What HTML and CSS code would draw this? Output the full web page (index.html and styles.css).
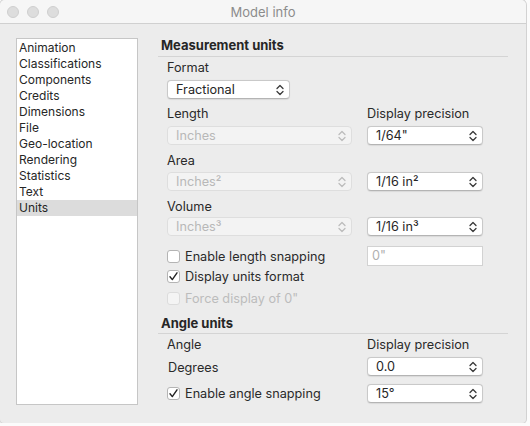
FILE: index.html
```html
<!DOCTYPE html>
<html>
<head>
<meta charset="utf-8">
<link rel="stylesheet" href="styles.css">
</head>
<body>
<div class="window">
  <div class="titlebar">
    <div class="lights"><span></span><span></span><span></span></div>
    <div class="title">Model info</div>
  </div>
  <div class="content">
    <ul class="list">
      <li>Animation</li>
      <li>Classifications</li>
      <li>Components</li>
      <li>Credits</li>
      <li>Dimensions</li>
      <li>File</li>
      <li>Geo-location</li>
      <li>Rendering</li>
      <li>Statistics</li>
      <li>Text</li>
      <li class="sel">Units</li>
    </ul>
    <div class="panel">
      <div class="heading">Measurement units</div>
      <div class="sep"></div>
      <div class="label m3">Format</div>
      <div class="popup w-fmt m4"><span>Fractional</span><svg class="chev" width="8" height="12" viewBox="0 0 8 12"><path d="M1 4.5L4 1.5L7 4.5M1 7.5L4 10.5L7 7.5"/></svg></div>

      <div class="grid m7">
        <div class="label">Length</div>
        <div class="label">Display precision</div>
      </div>
      <div class="grid m4">
        <div class="popup disabled"><span>Inches</span><svg class="chev" width="8" height="12" viewBox="0 0 8 12"><path d="M1 4.5L4 1.5L7 4.5M1 7.5L4 10.5L7 7.5"/></svg></div>
        <div class="popup"><span>1/64"</span><svg class="chev" width="8" height="12" viewBox="0 0 8 12"><path d="M1 4.5L4 1.5L7 4.5M1 7.5L4 10.5L7 7.5"/></svg></div>
      </div>

      <div class="label m8">Area</div>
      <div class="grid m3">
        <div class="popup disabled"><span>Inches²</span><svg class="chev" width="8" height="12" viewBox="0 0 8 12"><path d="M1 4.5L4 1.5L7 4.5M1 7.5L4 10.5L7 7.5"/></svg></div>
        <div class="popup"><span>1/16 in²</span><svg class="chev" width="8" height="12" viewBox="0 0 8 12"><path d="M1 4.5L4 1.5L7 4.5M1 7.5L4 10.5L7 7.5"/></svg></div>
      </div>

      <div class="label m8">Volume</div>
      <div class="grid m2">
        <div class="popup disabled"><span>Inches³</span><svg class="chev" width="8" height="12" viewBox="0 0 8 12"><path d="M1 4.5L4 1.5L7 4.5M1 7.5L4 10.5L7 7.5"/></svg></div>
        <div class="popup"><span>1/16 in³</span><svg class="chev" width="8" height="12" viewBox="0 0 8 12"><path d="M1 4.5L4 1.5L7 4.5M1 7.5L4 10.5L7 7.5"/></svg></div>
      </div>

      <div class="grid row20 m10">
        <label class="check"><span class="box"></span>Enable length snapping</label>
        <div class="field">0"</div>
      </div>
      <div class="grid row20">
        <label class="check"><span class="box on"><svg width="13" height="13" viewBox="0 0 13 13"><path d="M3 6.8L5.3 9.6L10 2.8"/></svg></span>Display units format</label>
      </div>
      <div class="grid row20 m2">
        <label class="check off"><span class="box"></span>Force display of 0"</label>
      </div>

      <div class="heading m7">Angle units</div>
      <div class="sep m2"></div>
      <div class="grid m3">
        <div class="label">Angle</div>
        <div class="label">Display precision</div>
      </div>
      <div class="grid m4">
        <div class="label plain">Degrees</div>
        <div class="popup"><span>0.0</span><svg class="chev" width="8" height="12" viewBox="0 0 8 12"><path d="M1 4.5L4 1.5L7 4.5M1 7.5L4 10.5L7 7.5"/></svg></div>
      </div>
      <div class="grid m8">
        <label class="check"><span class="box on"><svg width="13" height="13" viewBox="0 0 13 13"><path d="M3 6.8L5.3 9.6L10 2.8"/></svg></span>Enable angle snapping</label>
        <div class="popup"><span>15°</span><svg class="chev" width="8" height="12" viewBox="0 0 8 12"><path d="M1 4.5L4 1.5L7 4.5M1 7.5L4 10.5L7 7.5"/></svg></div>
      </div>
    </div>
  </div>
</div>
</body>
</html>
```

FILE: styles.css
```css
* { box-sizing: border-box; }
html, body {
  margin: 0;
  padding: 0;
  background: #fbfbfb;
  font-family: Inter, "Liberation Sans", sans-serif;
  color: #222;
}
.window {
  width: 526px;
  height: 423px;
  background: #ececec;
  border-radius: 5px 5px 4px 4px;
  box-shadow: 0 0 0 1px #d2d2d2;
  overflow: hidden;
}
.titlebar {
  height: 24px;
  background: #f6f6f6;
  border-bottom: 1px solid #d0d0d0;
  display: flex;
  align-items: center;
  position: relative;
}
.lights {
  display: flex;
  gap: 8px;
  padding-left: 7px;
}
.lights span {
  width: 12px;
  height: 12px;
  border-radius: 50%;
  background: #dddddd;
  border: 1px solid #cfcfcf;
}
.title {
  position: absolute;
  left: 0;
  right: 0;
  top: 0;
  line-height: 24px;
  text-align: center;
  font-size: 13px;
  color: #8c8c8c;
}
.content {
  display: flex;
  align-items: flex-start;
  padding: 13px 0 0 16px;
}
.list {
  list-style: none;
  margin: 1px 0 0 0;
  padding: 1px 0 0 0;
  width: 122px;
  height: 367px;
  background: #fff;
  border: 1px solid #c6c6c6;
  font-size: 12px;
  color: #262626;
}
.list li {
  height: 16px;
  line-height: 16px;
  padding-left: 2px;
}
.list li.sel { background: #dcdcdc; }
.panel {
  margin-left: 20px;
  width: 350px;
  font-size: 12.7px;
}
.heading {
  font-weight: 700;
  font-size: 13px;
  line-height: 16px;
  padding-left: 3px;
  color: #262626;
}
.sep {
  margin-top: 3px;
  height: 1px;
  background: #d4d4d4;
}
.label {
  line-height: 16px;
  padding-left: 9px;
  color: #2a2a2a;
}
.grid .label { padding-left: 0; }
.grid .label.plain { padding-left: 1px; line-height: 19px; position: relative; top: 1px; }
.grid {
  display: grid;
  grid-template-columns: 185px 116px;
  column-gap: 15px;
  padding-left: 9px;
  align-items: center;
}
.row20 { height: 20px; }
.m2 { margin-top: 2px; }
.m3 { margin-top: 3px; }
.m4 { margin-top: 4px; }
.m7 { margin-top: 7px; }
.m8 { margin-top: 8px; }
.m10 { margin-top: 10px; }
.sep.m2 { margin-top: 2px; }
.popup {
  height: 19px;
  background: #fff;
  border: 1px solid #c9c9c9;
  border-bottom-color: #b4b4b4;
  border-radius: 4px;
  box-shadow: 0 0.5px 1px rgba(0,0,0,0.08);
  display: flex;
  align-items: center;
  justify-content: space-between;
  padding: 0 5px 0 8px;
  color: #262626;
}
.popup.w-fmt {
  width: 123px;
  margin-left: 9px;
}
.chev { display: block; }
.chev path {
  fill: none;
  stroke: #3a3a3a;
  stroke-width: 1.3;
  stroke-linecap: round;
  stroke-linejoin: round;
}
.popup.disabled {
  background: #f3f3f3;
  border-color: #dedede;
  box-shadow: none;
  color: #b8b8b8;
}
.popup.disabled .chev path { stroke: #bcbcbc; }
.check {
  display: flex;
  align-items: center;
  white-space: nowrap;
  color: #2a2a2a;
}
.check .box {
  width: 13px;
  height: 13px;
  background: #fff;
  border: 1px solid #b4b4b4;
  border-radius: 3px;
  margin-right: 5px;
  flex: none;
  position: relative;
}
.check .box svg {
  position: absolute;
  left: -1px;
  top: -1px;
}
.check .box svg path {
  fill: none;
  stroke: #222;
  stroke-width: 1.4;
  stroke-linecap: round;
  stroke-linejoin: round;
}
.check.off { color: #bcbcbc; }
.check.off .box { background: #f4f4f4; border-color: #dcdcdc; }
.field {
  height: 20px;
  background: #fff;
  border: 1px solid #d2d2d2;
  color: #b0b0b0;
  line-height: 18px;
  padding-left: 4px;
}
```
